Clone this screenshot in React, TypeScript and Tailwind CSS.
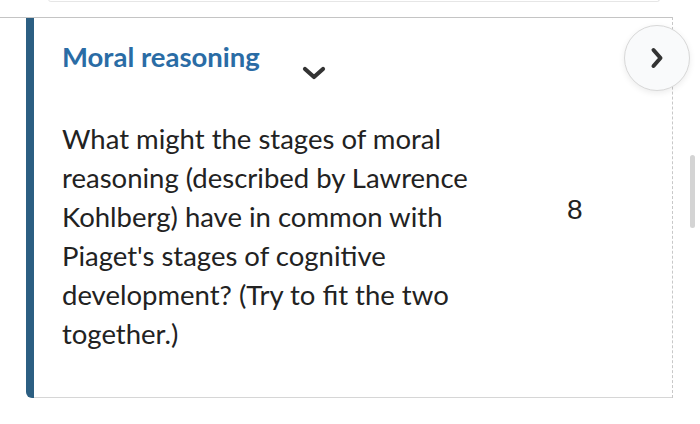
export default function App() {
    return (
        <div className="relative w-[700px] h-[424px] overflow-hidden bg-white" style={{ fontFamily: 'Lato, "Noto Sans", sans-serif' }}>
            {/* Previous card edge */}
            <div className="ml-[48px] w-[612px] h-[3px] -mt-[1px] rounded-b-[6px] border-b border-x border-[#e6e6e6]" />

            {/* Divider */}
            <div className="mt-[15px] w-[673px] border-t border-[#c4c4c4]" />

            {/* Card */}
            <div className="flex h-[380px]">
                <div className="ml-[26px] w-[8px] bg-[#2c5f82] rounded-bl-[6px]" />
                <div className="w-[638px] border-b border-[#d6d6d6] pl-[28px]">
                    {/* Header */}
                    <div className="flex items-start pt-[23px]">
                        <h2 className="text-[27.5px] leading-[32px] font-bold text-[#2a6ca5]">Moral reasoning</h2>
                        <svg className="ml-[42px] mt-[25px]" width="24" height="15" viewBox="0 0 24 15" fill="none">
                            <path d="M3 3 L12 11 L21 3" stroke="#333" strokeWidth="4.2" strokeLinecap="round" strokeLinejoin="round" />
                        </svg>
                    </div>

                    {/* Body */}
                    <div className="flex mt-[38px]">
                        <p className="w-[430px] text-[27.5px] leading-[39px] text-[#222]">
                            What might the stages of moral reasoning (described by Lawrence Kohlberg) have in common with Piaget's stages of cognitive development? (Try to fit the two together.)
                        </p>
                        <span
                            className="ml-[75px] mt-[75px] text-[28px] leading-[32px] text-[#222]"
                            style={{ fontFamily: '"Liberation Sans", Arial, sans-serif' }}
                        >
                            8
                        </span>
                    </div>
                </div>
                {/* Dashed right edge */}
                <div className="border-l border-dashed border-[#c8c8c8] -mt-[1px]" />
            </div>

            {/* Next button */}
            <button className="absolute left-[624px] top-[25px] w-[66px] h-[66px] rounded-full bg-[#f9fafb] border border-[#d8d8d8] shadow-[0_2px_6px_rgba(0,0,0,0.08)] flex items-center justify-center">
                <svg width="14" height="22" viewBox="0 0 14 22" fill="none">
                    <path d="M3.5 3 L10.5 11 L3.5 19" stroke="#333" strokeWidth="4" strokeLinecap="round" strokeLinejoin="round" />
                </svg>
            </button>

            {/* Scrollbar */}
            <div className="absolute left-[690px] top-[155px] w-[5px] h-[73px] rounded-full bg-[#d4d4d4]" />
        </div>
    );
}
